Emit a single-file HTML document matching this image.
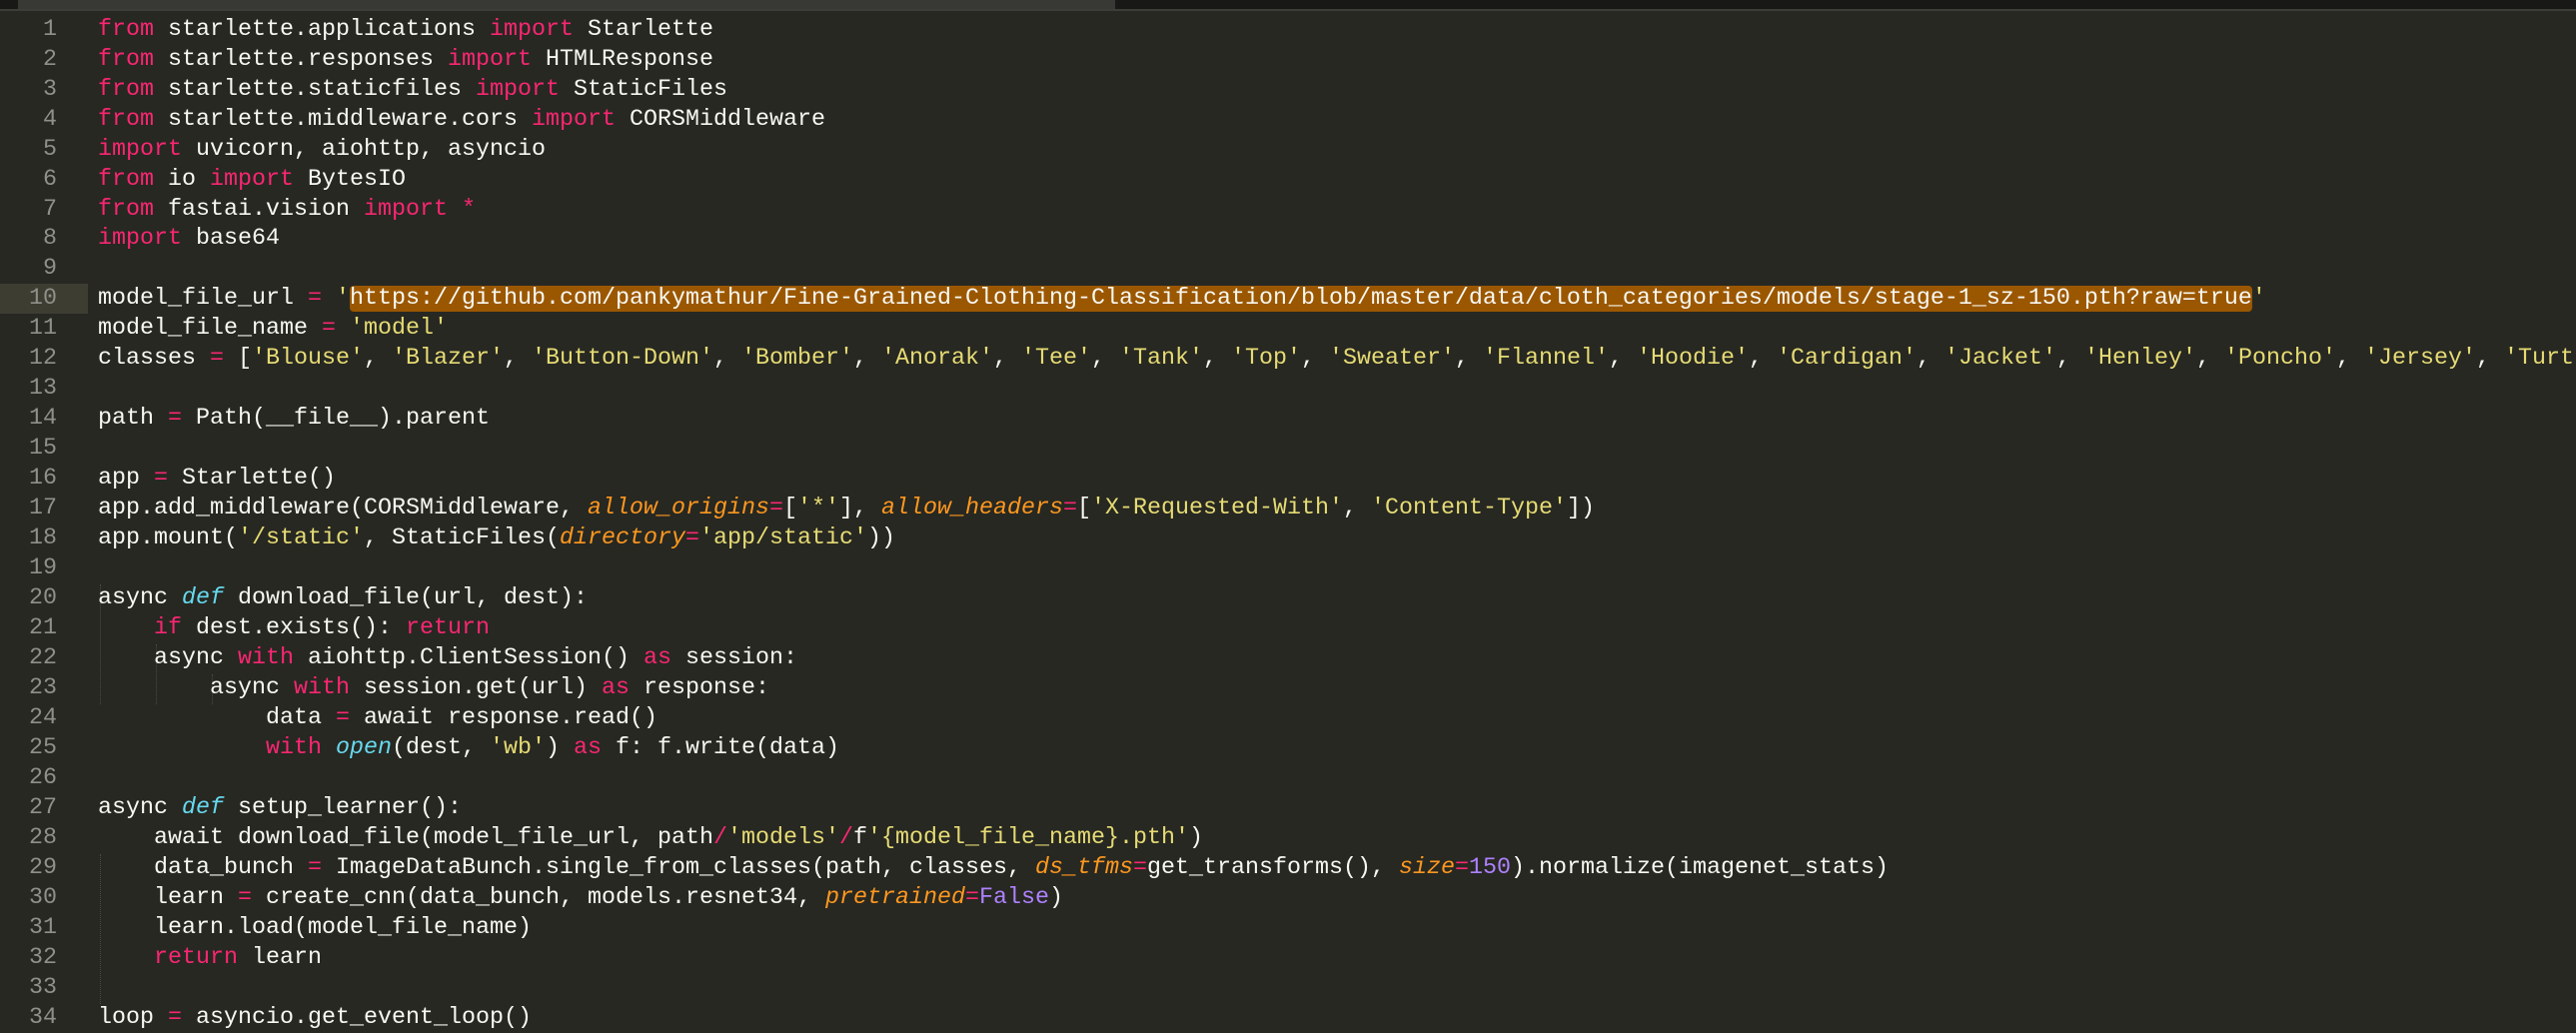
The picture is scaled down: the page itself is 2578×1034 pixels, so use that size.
<!DOCTYPE html>
<html><head><meta charset="utf-8">
<style>
html,body{margin:0;padding:0;}
body{width:2578px;height:1034px;background:#272822;overflow:hidden;position:relative;font-family:"Liberation Mono",monospace;font-size:23.33px;color:#f8f8f2;}
.top{position:absolute;left:0;top:0;width:2578px;height:9px;background:#181816;}
.tab{position:absolute;left:18px;top:0;width:1098px;height:9px;background:#383835;}
.topline{position:absolute;left:0;top:9px;width:2578px;height:2px;background:#3c3c38;}
.ln{position:absolute;left:0;width:57px;text-align:right;color:#8f908a;height:30px;line-height:30px;}
.cl{position:absolute;left:98px;white-space:pre;height:30px;line-height:30px;}
.cur{position:absolute;left:0;width:88px;height:30px;background:#3e3d32;}
.k{color:#f92672}.s{color:#e6db74}.i{color:#66d9ef;font-style:italic}.p{color:#fd971f;font-style:italic}.n{color:#ae81ff}
.sel{background:#9b5700;border-radius:4px;}
.g{position:absolute;width:0;border-left:1px dotted #4a4a44;}
</style></head><body>
<div class="top"><div class="tab"></div></div><div class="topline"></div>
<div class="cur" style="top:284px"></div>
<div class="g" style="left:100px;top:585px;height:120px"></div>
<div class="g" style="left:156px;top:645px;height:60px"></div>
<div class="g" style="left:212px;top:675px;height:30px"></div>
<div class="g" style="left:100px;top:855px;height:150px"></div>

<div class="ln" style="top:15px">1</div><div class="cl" style="top:15px"><span class="k">from</span> starlette.applications <span class="k">import</span> Starlette</div>
<div class="ln" style="top:45px">2</div><div class="cl" style="top:45px"><span class="k">from</span> starlette.responses <span class="k">import</span> HTMLResponse</div>
<div class="ln" style="top:75px">3</div><div class="cl" style="top:75px"><span class="k">from</span> starlette.staticfiles <span class="k">import</span> StaticFiles</div>
<div class="ln" style="top:105px">4</div><div class="cl" style="top:105px"><span class="k">from</span> starlette.middleware.cors <span class="k">import</span> CORSMiddleware</div>
<div class="ln" style="top:135px">5</div><div class="cl" style="top:135px"><span class="k">import</span> uvicorn, aiohttp, asyncio</div>
<div class="ln" style="top:165px">6</div><div class="cl" style="top:165px"><span class="k">from</span> io <span class="k">import</span> BytesIO</div>
<div class="ln" style="top:195px">7</div><div class="cl" style="top:195px"><span class="k">from</span> fastai.vision <span class="k">import</span> <span class="k">*</span></div>
<div class="ln" style="top:224px">8</div><div class="cl" style="top:224px"><span class="k">import</span> base64</div>
<div class="ln" style="top:254px">9</div>
<div class="ln" style="top:284px">10</div><div class="cl" style="top:284px">model_file_url <span class="k">=</span> <span class="s">'<span class="sel" style="color:#f8f8f2">https://github.com/pankymathur/Fine-Grained-Clothing-Classification/blob/master/data/cloth_categories/models/stage-1_sz-150.pth?raw=true</span>'</span></div>
<div class="ln" style="top:314px">11</div><div class="cl" style="top:314px">model_file_name <span class="k">=</span> <span class="s">'model'</span></div>
<div class="ln" style="top:344px">12</div><div class="cl" style="top:344px">classes <span class="k">=</span> [<span class="s">'Blouse'</span>, <span class="s">'Blazer'</span>, <span class="s">'Button-Down'</span>, <span class="s">'Bomber'</span>, <span class="s">'Anorak'</span>, <span class="s">'Tee'</span>, <span class="s">'Tank'</span>, <span class="s">'Top'</span>, <span class="s">'Sweater'</span>, <span class="s">'Flannel'</span>, <span class="s">'Hoodie'</span>, <span class="s">'Cardigan'</span>, <span class="s">'Jacket'</span>, <span class="s">'Henley'</span>, <span class="s">'Poncho'</span>, <span class="s">'Jersey'</span>, <span class="s">'Turtleneck'</span></div>
<div class="ln" style="top:374px">13</div>
<div class="ln" style="top:404px">14</div><div class="cl" style="top:404px">path <span class="k">=</span> Path(__file__).parent</div>
<div class="ln" style="top:434px">15</div>
<div class="ln" style="top:464px">16</div><div class="cl" style="top:464px">app <span class="k">=</span> Starlette()</div>
<div class="ln" style="top:494px">17</div><div class="cl" style="top:494px">app.add_middleware(CORSMiddleware, <span class="p">allow_origins</span><span class="k">=</span>[<span class="s">'*'</span>], <span class="p">allow_headers</span><span class="k">=</span>[<span class="s">'X-Requested-With'</span>, <span class="s">'Content-Type'</span>])</div>
<div class="ln" style="top:524px">18</div><div class="cl" style="top:524px">app.mount(<span class="s">'/static'</span>, StaticFiles(<span class="p">directory</span><span class="k">=</span><span class="s">'app/static'</span>))</div>
<div class="ln" style="top:554px">19</div>
<div class="ln" style="top:584px">20</div><div class="cl" style="top:584px">async <span class="i">def</span> download_file(url, dest):</div>
<div class="ln" style="top:614px">21</div><div class="cl" style="top:614px">    <span class="k">if</span> dest.exists(): <span class="k">return</span></div>
<div class="ln" style="top:644px">22</div><div class="cl" style="top:644px">    async <span class="k">with</span> aiohttp.ClientSession() <span class="k">as</span> session:</div>
<div class="ln" style="top:674px">23</div><div class="cl" style="top:674px">        async <span class="k">with</span> session.get(url) <span class="k">as</span> response:</div>
<div class="ln" style="top:704px">24</div><div class="cl" style="top:704px">            data <span class="k">=</span> await response.read()</div>
<div class="ln" style="top:734px">25</div><div class="cl" style="top:734px">            <span class="k">with</span> <span class="i">open</span>(dest, <span class="s">'wb'</span>) <span class="k">as</span> f: f.write(data)</div>
<div class="ln" style="top:764px">26</div>
<div class="ln" style="top:794px">27</div><div class="cl" style="top:794px">async <span class="i">def</span> setup_learner():</div>
<div class="ln" style="top:824px">28</div><div class="cl" style="top:824px">    await download_file(model_file_url, path<span class="k">/</span><span class="s">'models'</span><span class="k">/</span>f<span class="s">'{model_file_name}.pth'</span>)</div>
<div class="ln" style="top:854px">29</div><div class="cl" style="top:854px">    data_bunch <span class="k">=</span> ImageDataBunch.single_from_classes(path, classes, <span class="p">ds_tfms</span><span class="k">=</span>get_transforms(), <span class="p">size</span><span class="k">=</span><span class="n">150</span>).normalize(imagenet_stats)</div>
<div class="ln" style="top:884px">30</div><div class="cl" style="top:884px">    learn <span class="k">=</span> create_cnn(data_bunch, models.resnet34, <span class="p">pretrained</span><span class="k">=</span><span class="n">False</span>)</div>
<div class="ln" style="top:914px">31</div><div class="cl" style="top:914px">    learn.load(model_file_name)</div>
<div class="ln" style="top:944px">32</div><div class="cl" style="top:944px">    <span class="k">return</span> learn</div>
<div class="ln" style="top:974px">33</div>
<div class="ln" style="top:1004px">34</div><div class="cl" style="top:1004px">loop <span class="k">=</span> asyncio.get_event_loop()</div>
</body></html>
